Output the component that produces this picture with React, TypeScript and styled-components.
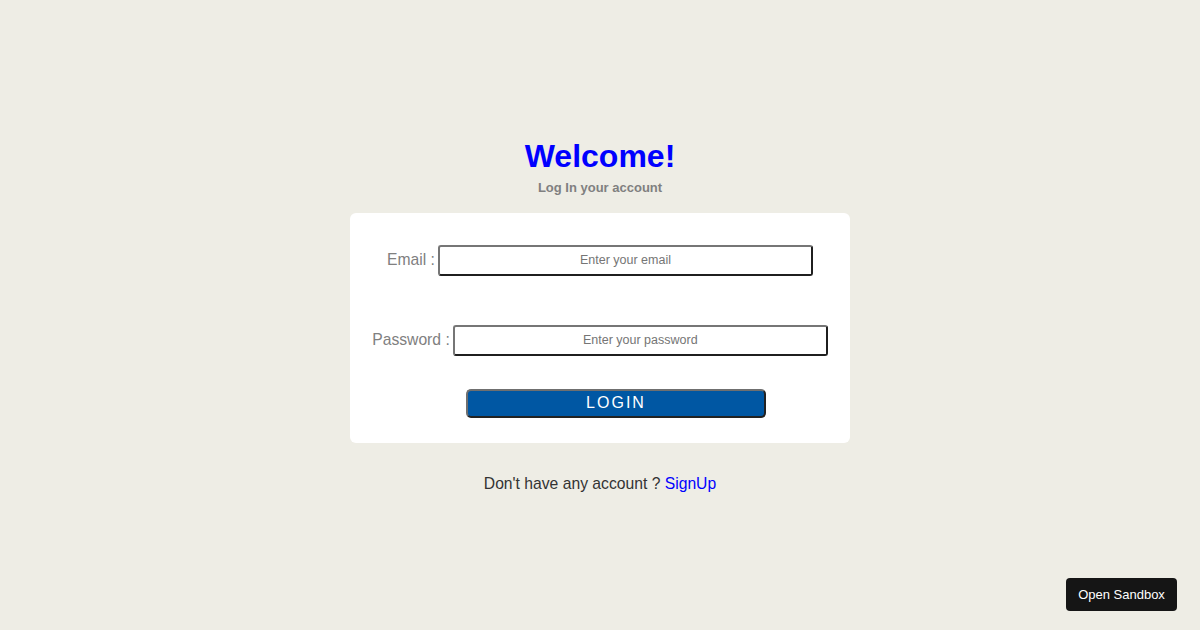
import React from "react";
import styled, { createGlobalStyle } from "styled-components";

const GlobalStyle = createGlobalStyle`
  * {
    box-sizing: border-box;
  }
  body {
    margin: 0;
    background-color: #eeede5;
    font-family: "Liberation Sans", Arial, sans-serif;
  }
`;

const Page = styled.div`
  min-height: 100vh;
  display: flex;
  flex-direction: column;
  align-items: center;
  justify-content: center;
`;

const Title = styled.h1`
  margin: 0;
  font-size: 32px;
  line-height: 37px;
  font-weight: 700;
  color: #0000ff;
`;

const Subtitle = styled.h5`
  margin: 5px 0 18px;
  font-size: 13px;
  line-height: 15px;
  font-weight: 700;
  color: #808080;
`;

const Card = styled.form`
  width: 500px;
  background-color: #ffffff;
  border-radius: 6px;
  padding: 32px 0 25px;
  display: flex;
  flex-direction: column;
  align-items: center;
`;

const Row = styled.div<{ $gap: number }>`
  display: flex;
  align-items: center;
  justify-content: center;
  gap: 3px;
  margin-bottom: ${(props) => props.$gap}px;
`;

const Label = styled.label`
  font-size: 15.7px;
  color: #808080;
`;

const Input = styled.input`
  width: 375px;
  height: 31px;
  border: 2px solid;
  border-color: #767676 #1f1f1f #1f1f1f #767676;
  border-radius: 3px;
  text-align: center;
  font-family: "Liberation Sans", Arial, sans-serif;
  font-size: 12.5px;
  outline: none;

  &::placeholder {
    color: #757575;
  }
`;

const LoginButton = styled.button`
  width: 300px;
  height: 29px;
  margin-left: 32px;
  background-color: #0057a3;
  color: #ffffff;
  border: 2px solid;
  border-color: #6f6f6f #222222 #222222 #6f6f6f;
  border-radius: 5px;
  font-family: "Liberation Sans", Arial, sans-serif;
  font-size: 16px;
  letter-spacing: 2px;
  cursor: pointer;
`;

const Footer = styled.p`
  margin: 32px 0 0;
  font-size: 15.7px;
  line-height: 18px;
  color: #333333;
`;

const SignUpLink = styled.a`
  color: #0000ff;
  text-decoration: none;
`;

const SandboxButton = styled.button`
  position: fixed;
  right: 23px;
  bottom: 19px;
  width: 111px;
  height: 33px;
  background-color: #151515;
  color: #ffffff;
  border: none;
  border-radius: 4px;
  font-family: "Liberation Sans", Arial, sans-serif;
  font-size: 13px;
`;

const App: React.FC = () => {
  return (
    <>
      <GlobalStyle />
      <Page>
        <Title>Welcome!</Title>
        <Subtitle>Log In your account</Subtitle>
        <Card onSubmit={(e) => e.preventDefault()}>
          <Row $gap={49}>
            <Label htmlFor="email">Email :</Label>
            <Input id="email" type="email" placeholder="Enter your email" />
          </Row>
          <Row $gap={33}>
            <Label htmlFor="password">Password :</Label>
            <Input
              id="password"
              type="password"
              placeholder="Enter your password"
            />
          </Row>
          <LoginButton type="submit">LOGIN</LoginButton>
        </Card>
        <Footer>
          Don't have any account ? <SignUpLink href="#">SignUp</SignUpLink>
        </Footer>
      </Page>
      <SandboxButton>Open Sandbox</SandboxButton>
    </>
  );
};

export default App;
